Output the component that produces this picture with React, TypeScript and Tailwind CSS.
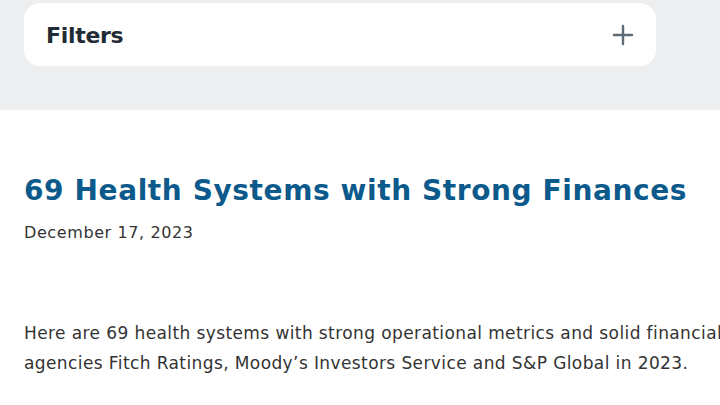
export default function App() {
  return (
    <div className="w-[720px] h-[405px] overflow-hidden bg-white" style={{ fontFamily: '"DejaVu Sans", "Liberation Sans", sans-serif' }}>
      <div className="bg-[#edeef0] h-[110px] pt-[3px] px-6">
        <div className="w-[632px] h-[63px] bg-white rounded-2xl flex items-center justify-between pl-[22px] pr-[22px]">
          <span className="text-[22px] font-bold text-[#222b33] pt-[1px] tracking-[-0.3px]">Filters</span>
          <svg width="22" height="22" viewBox="0 0 22 22" fill="none" stroke="#5d6b77" strokeWidth="2.4" strokeLinecap="round">
            <path d="M11 2v18M2 11h18" />
          </svg>
        </div>
      </div>
      <div className="px-6 pt-[63px]">
        <h1 className="text-[28px] leading-[36px] font-bold text-[#0b5a8b] tracking-[0.6px]">69 Health Systems with Strong Finances</h1>
        <p className="mt-[12px] text-[16px] text-[#333] tracking-[0.6px]">December 17, 2023</p>
        <p className="mt-[73px] text-[17px] leading-[30px] text-[#333] tracking-[0.4px] whitespace-nowrap">
          Here are 69 health systems with strong operational metrics and solid financial positions, according to credit rating
          <br />
          agencies Fitch Ratings, Moody’s Investors Service and S&amp;P Global in 2023.
        </p>
      </div>
    </div>
  )
}
